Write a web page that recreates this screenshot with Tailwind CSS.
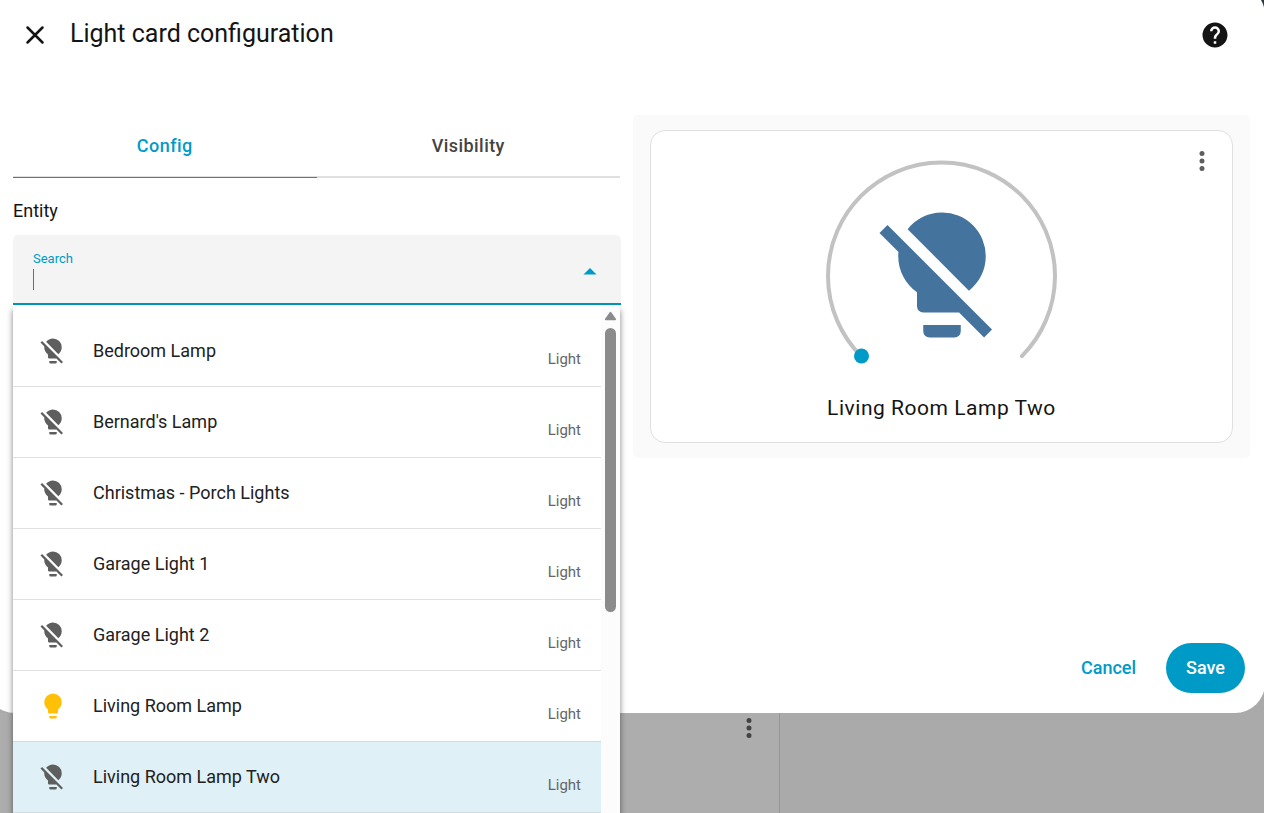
<!DOCTYPE html>
<html lang="en">
<head>
  <meta charset="UTF-8">
  <meta name="viewport" content="width=device-width, initial-scale=1.0">
  <title>Light card configuration</title>
  <script src="https://cdn.jsdelivr.net/npm/@tailwindcss/browser@4"></script>
</head>
<body class="relative flex h-screen flex-col overflow-hidden bg-[#aaaaaa] font-['Roboto',sans-serif] text-[#141414]">

  <!-- Shared icons -->
  <svg class="hidden">
    <symbol id="bulb-off" viewBox="0 0 24 24">
      <path d="M12,2C9.76,2 7.78,3.05 6.5,4.68L16.31,14.5C17.94,13.21 19,11.24 19,9A7,7 0 0,0 12,2M3.28,4L2,5.27L5.04,8.3C5,8.53 5,8.76 5,9C5,11.38 6.19,13.47 8,14.74V17A1,1 0 0,0 9,18H14.73L18.73,22L20,20.72L3.28,4M9,20V21A1,1 0 0,0 10,22H14A1,1 0 0,0 15,21V20H9Z"/>
    </symbol>
    <symbol id="bulb-on" viewBox="0 0 24 24">
      <path d="M12,2A7,7 0 0,0 5,9C5,11.38 6.19,13.47 8,14.74V17A1,1 0 0,0 9,18H15A1,1 0 0,0 16,17V14.74C17.81,13.47 19,11.38 19,9A7,7 0 0,0 12,2M9,21A1,1 0 0,0 10,22H14A1,1 0 0,0 15,21V20H9V21Z"/>
    </symbol>
    <symbol id="dots" viewBox="0 0 24 24">
      <path d="M12,16A2,2 0 0,1 14,18A2,2 0 0,1 12,20A2,2 0 0,1 10,18A2,2 0 0,1 12,16M12,10A2,2 0 0,1 14,12A2,2 0 0,1 12,14A2,2 0 0,1 10,12A2,2 0 0,1 12,10M12,4A2,2 0 0,1 14,6A2,2 0 0,1 12,8A2,2 0 0,1 10,6A2,2 0 0,1 12,4Z"/>
    </symbol>
  </svg>

  <!-- Dialog -->
  <div class="bg-[linear-gradient(#2c3a42_50px,#aaaaaa_50px)]">
    <main role="dialog" aria-labelledby="dialog-title" class="-mt-[15px] -mr-px -ml-[15px] flex min-h-[728px] flex-col rounded-[30px] bg-white pt-[15px] pr-[15px] pl-7">
      <header class="flex h-[69px] items-center">
        <button type="button" aria-label="Close" class="ml-[7px] size-[30px]">
          <svg class="size-[30px]" viewBox="0 0 24 24" fill="none" stroke="currentColor" stroke-width="2" stroke-linecap="round"><path d="M6 6L18 18M18 6L6 18"/></svg>
        </button>
        <h1 id="dialog-title" class="ml-5 pb-0.5 text-[25px] leading-8">Light card configuration</h1>
        <button type="button" aria-label="Help" class="mr-5 ml-auto size-[30px]">
          <svg class="size-[30px]" viewBox="0 0 24 24" fill="currentColor"><path d="M15.07,11.25L14.17,12.17C13.45,12.89 13,13.5 13,15H11V14.5C11,13.39 11.45,12.39 12.17,11.67L13.41,10.41C13.78,10.05 14,9.55 14,9C14,7.89 13.1,7 12,7A2,2 0 0,0 10,9H8A4,4 0 0,1 12,5A4,4 0 0,1 16,9C16,9.88 15.64,10.67 15.07,11.25M13,19H11V17H13M12,2A10,10 0 0,0 2,12A10,10 0 0,0 12,22A10,10 0 0,0 22,12C22,6.47 17.5,2 12,2Z"/></svg>
        </button>
      </header>

      <div class="mt-[46px] grid grid-cols-[608fr_617fr] gap-3">
        <!-- Editor -->
        <section>
          <div role="tablist" class="mr-px grid h-[63px] grid-cols-2 border-b-2 border-[#e0e0e0] text-lg font-medium tracking-wide">
            <button type="button" role="tab" aria-selected="true" class="-mb-0.5 border-b border-[#009ac7] text-[#009ac7]">Config</button>
            <button type="button" role="tab" aria-selected="false" class="-mb-0.5 border-b border-transparent text-[#434343]">Visibility</button>
          </div>
          <label for="entity" class="mt-[19px] block text-lg leading-7">Entity</label>
          <div class="relative mt-[10px]">
            <div class="flex h-[70px] items-center rounded-t-[5px] border-b-2 border-[#0095bd] bg-[#f4f4f4] px-5 pt-1">
              <div class="flex-1">
                <label for="entity" class="block text-[13px] leading-4 text-[#009ac7]">Search</label>
                <div class="flex h-6 items-center">
                  <input id="entity" type="text" role="combobox" aria-expanded="true" class="h-[21px] w-full border-l border-[#0095bd] bg-transparent text-lg caret-transparent outline-none">
                </div>
              </div>
              <button type="button" aria-label="Toggle list" class="mr-1">
                <svg class="h-[7px] w-[14px]" viewBox="0 0 14 7" fill="#009ac7"><path d="M0.5 6.5L7 0L13.5 6.5Z"/></svg>
              </button>
            </div>

            <!-- Options list -->
            <div class="absolute inset-x-0 top-[70px] z-10 mr-px flex h-[520px] bg-white shadow-[0_5px_6px_rgba(0,0,0,0.5)]">
              <ul role="listbox" class="flex-1 pt-[11px] text-lg text-[#212121]">
                <li role="option" class="flex h-[71px] items-center border-b border-[#e0e0e0] pr-5 pl-[25px]">
                  <svg class="size-[30px] fill-[#5e5e5e]"><use href="#bulb-off"/></svg>
                  <span class="ml-[25px] flex-1">Bedroom Lamp</span>
                  <span class="mt-[18px] text-[15px] text-[#666666]">Light</span>
                </li>
                <li role="option" class="flex h-[71px] items-center border-b border-[#e0e0e0] pr-5 pl-[25px]">
                  <svg class="size-[30px] fill-[#5e5e5e]"><use href="#bulb-off"/></svg>
                  <span class="ml-[25px] flex-1">Bernard's Lamp</span>
                  <span class="mt-[18px] text-[15px] text-[#666666]">Light</span>
                </li>
                <li role="option" class="flex h-[71px] items-center border-b border-[#e0e0e0] pr-5 pl-[25px]">
                  <svg class="size-[30px] fill-[#5e5e5e]"><use href="#bulb-off"/></svg>
                  <span class="ml-[25px] flex-1">Christmas - Porch Lights</span>
                  <span class="mt-[18px] text-[15px] text-[#666666]">Light</span>
                </li>
                <li role="option" class="flex h-[71px] items-center border-b border-[#e0e0e0] pr-5 pl-[25px]">
                  <svg class="size-[30px] fill-[#5e5e5e]"><use href="#bulb-off"/></svg>
                  <span class="ml-[25px] flex-1">Garage Light 1</span>
                  <span class="mt-[18px] text-[15px] text-[#666666]">Light</span>
                </li>
                <li role="option" class="flex h-[71px] items-center border-b border-[#e0e0e0] pr-5 pl-[25px]">
                  <svg class="size-[30px] fill-[#5e5e5e]"><use href="#bulb-off"/></svg>
                  <span class="ml-[25px] flex-1">Garage Light 2</span>
                  <span class="mt-[18px] text-[15px] text-[#666666]">Light</span>
                </li>
                <li role="option" class="flex h-[71px] items-center border-b border-[#d0dcdf] pr-5 pl-[25px]">
                  <svg class="size-[30px] fill-[#ffc107]"><use href="#bulb-on"/></svg>
                  <span class="ml-[25px] flex-1">Living Room Lamp</span>
                  <span class="mt-[18px] text-[15px] text-[#666666]">Light</span>
                </li>
                <li role="option" aria-selected="true" class="flex h-[71px] items-center border-b border-[#d0dcdf] bg-[#e0f0f7] pr-5 pl-[25px]">
                  <svg class="size-[30px] fill-[#5e5e5e]"><use href="#bulb-off"/></svg>
                  <span class="ml-[25px] flex-1">Living Room Lamp Two</span>
                  <span class="mt-[18px] text-[15px] text-[#666666]">Light</span>
                </li>
              </ul>
              <!-- Scrollbar -->
              <div class="flex w-[19px] flex-col items-center bg-[#fcfcfc] pt-1.5">
                <svg class="h-[10px] w-[13px]" viewBox="0 0 14 10" fill="#8b8b8b" stroke="#8b8b8b" stroke-width="2" stroke-linejoin="round"><path d="M2 8.5L7 1.5L12 8.5Z"/></svg>
                <div class="mt-[7px] h-[284px] w-[11px] rounded-full bg-[#8b8b8b]"></div>
              </div>
            </div>
          </div>
        </section>

        <!-- Preview -->
        <section class="rounded-[5px] bg-[#fafafa] px-[17px] py-[15px]">
          <div class="relative flex flex-col items-center rounded-[15px] border border-[#e0e0e0] bg-white pt-6 pb-5">
            <button type="button" aria-label="More" class="absolute top-[15px] right-[15px] size-[30px]">
              <svg class="size-[30px] fill-[#5e5e5e]"><use href="#dots"/></svg>
            </button>
            <div class="relative grid size-[239px] place-items-center">
              <svg class="absolute inset-0 size-full" viewBox="0 0 239 239" fill="none">
                <path d="M39.1 201.1A113.5 113.5 0 1 1 199.9 201.1" stroke="#c2c2c2" stroke-width="4" stroke-linecap="round"/>
                <circle cx="39.5" cy="201" r="7.5" fill="#009ac7"/>
              </svg>
              <svg class="size-[150px] fill-[#44739e]"><use href="#bulb-off"/></svg>
            </div>
            <p class="text-[21px] leading-7 tracking-wide">Living Room Lamp Two</p>
          </div>
        </section>
      </div>

      <footer class="mt-auto mb-5 flex h-[50px] items-center justify-end gap-[10px] pr-[5px] text-lg font-medium">
        <button type="button" class="h-full px-5 text-[#009ac7]">Cancel</button>
        <button type="button" class="h-full rounded-full bg-[#009ac7] px-5 text-white">Save</button>
      </footer>
    </main>
  </div>

  <!-- Dashboard behind the dialog -->
  <div class="flex flex-1">
    <div class="flex w-[780px] justify-end border-r border-[#969696] bg-[#adadad] pr-[15px]">
      <svg class="size-[30px] fill-[#434343]"><use href="#dots"/></svg>
    </div>
  </div>
</body>
</html>
